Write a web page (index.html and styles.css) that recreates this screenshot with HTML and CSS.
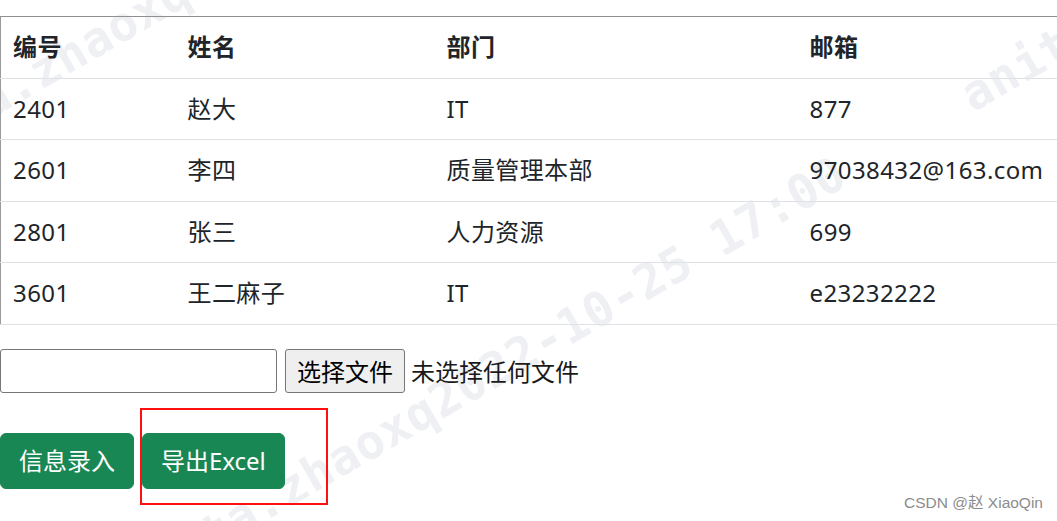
FILE: index.html
```html
<!DOCTYPE html>
<html lang="zh-CN">
  <head>
    <meta charset="utf-8" />
    <meta name="viewport" content="width=device-width, initial-scale=1" />
    <title>员工信息</title>
    <link rel="stylesheet" href="styles.css">
  </head>
  <body>
    <div class="page">
      <!-- watermark -->
      <div class="watermark">
        <div class="watermark__line watermark__line--one">
          <span>anita.zhaoxq2022-10-25 17:00</span><span>anita.zhaoxq2022-10-25 17:00</span>
        </div>
        <div class="watermark__line watermark__line--two">
          <span>anita.zhaoxq2022-10-25 17:00</span><span>anita.zhaoxq2022-10-25 17:00</span>
        </div>
      </div>

      <div class="content">
        <table class="staff-table">
          <colgroup>
            <col class="col-id" />
            <col class="col-name" />
            <col class="col-dept" />
            <col class="col-mail" />
          </colgroup>
          <thead>
            <tr>
              <th>编号</th>
              <th>姓名</th>
              <th>部门</th>
              <th>邮箱</th>
            </tr>
          </thead>
          <tbody>
            <tr>
              <td>2401</td>
              <td>赵大</td>
              <td>IT</td>
              <td>877</td>
            </tr>
            <tr>
              <td>2601</td>
              <td>李四</td>
              <td>质量管理本部</td>
              <td>97038432@163.com</td>
            </tr>
            <tr>
              <td>2801</td>
              <td>张三</td>
              <td>人力资源</td>
              <td>699</td>
            </tr>
            <tr>
              <td>3601</td>
              <td>王二麻子</td>
              <td>IT</td>
              <td>e23232222</td>
            </tr>
          </tbody>
        </table>

        <div class="upload-row">
          <input class="upload-row__text" type="text" />
          <button class="upload-row__pick" type="button">选择文件</button>
          <span class="upload-row__status">未选择任何文件</span>
        </div>

        <div class="action-row">
          <button class="btn-success" type="button">信息录入</button>
          <button class="btn-success" type="button">导出Excel</button>
        </div>
      </div>

      <div class="highlight-box"></div>
      <div class="credit">CSDN @赵 XiaoQin</div>
    </div>
  </body>
</html>
```

FILE: styles.css
```css
html,
body {
  margin: 0;
  padding: 0;
  background-color: #fff;
  overflow: hidden;
}
.page {
  position: relative;
  width: 1057px;
  height: 521px;
  padding-top: 16px;
  box-sizing: border-box;
  font-family: "Noto Sans", "Noto Sans CJK SC", sans-serif;
  font-size: 24px;
  color: #212529;
}

/* watermark */
.watermark {
  position: absolute;
  top: 0;
  left: 0;
  right: 0;
  bottom: 0;
  overflow: hidden;
  pointer-events: none;
  z-index: 0;
}
.watermark__line {
  position: absolute;
  display: flex;
  height: 48px;
  line-height: 48px;
  white-space: pre;
  font-family: "DejaVu Sans Mono", monospace;
  font-weight: bold;
  font-size: 48px;
  letter-spacing: 0.6px;
  color: #eef0f3;
  transform-origin: 0 50%;
  transform: rotate(-30deg);
}
.watermark__line span {
  margin-right: 142px;
}
.watermark__line--one {
  left: -121px;
  top: 140px;
}
.watermark__line--two {
  left: 126px;
  top: 558px;
}

.content {
  position: relative;
  z-index: 1;
}

/* table */
.staff-table {
  width: 1057px;
  border-collapse: collapse;
  table-layout: fixed;
  border-top: 1px solid #8f8f8f;
  border-left: 1px solid #9a9a9a;
}
.col-id {
  width: 175px;
}
.col-name {
  width: 259px;
}
.col-dept {
  width: 363px;
}
.staff-table th,
.staff-table td {
  padding: 12px 12px 12.6px;
  line-height: 36px;
  text-align: left;
  white-space: nowrap;
  letter-spacing: 0.4px;
  border-bottom: 1px solid #dee2e6;
}
.staff-table th {
  font-weight: bold;
}

/* upload */
.upload-row {
  display: flex;
  align-items: center;
  margin-top: 24px;
  height: 44px;
}
.upload-row__text {
  width: 277px;
  height: 44px;
  box-sizing: border-box;
  margin: 0;
  border: 1px solid #767676;
  border-radius: 3px;
  background: #fff;
}
.upload-row__pick {
  margin: 0 0 0 8px;
  height: 44px;
  width: 120px;
  box-sizing: border-box;
  padding: 0;
  border: 1px solid #767676;
  border-radius: 3px;
  background-color: #efefef;
  font-family: inherit;
  font-size: 24px;
  color: #000;
}
.upload-row__status {
  margin-left: 6px;
  color: #1a1a1a;
}

/* actions */
.action-row {
  display: flex;
  gap: 8px;
  margin-top: 40px;
}
.btn-success {
  margin: 0;
  padding: 9px 18px;
  line-height: 36px;
  font-family: inherit;
  font-size: 24px;
  color: #fff;
  background-color: #198754;
  border: 1px solid #198754;
  border-radius: 6px;
}

/* annotation */
.highlight-box {
  position: absolute;
  left: 140px;
  top: 408px;
  width: 188px;
  height: 97px;
  box-sizing: border-box;
  border: 2px solid #ff1010;
  z-index: 2;
}
.credit {
  position: absolute;
  right: 14px;
  bottom: 9px;
  font-family: "Liberation Sans", "Noto Sans CJK SC", sans-serif;
  font-size: 15.5px;
  color: #8c8c8c;
  z-index: 2;
}
```
